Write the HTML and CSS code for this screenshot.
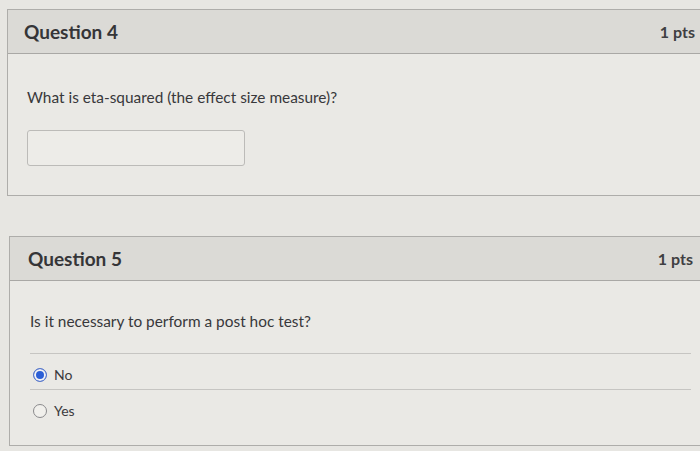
FILE: index.html
```html
<!DOCTYPE html>
<html>
<head>
<meta charset="utf-8">
<link rel="stylesheet" href="styles.css">
</head>
<body>
<div class="page">
  <section class="card q4">
    <header class="card-head">
      <h2 class="title">Question 4</h2>
      <span class="pts">1 pts</span>
    </header>
    <div class="card-body q4-body">
      <p class="prompt">What is eta-squared (the effect size measure)?</p>
      <div class="input"></div>
    </div>
  </section>

  <section class="card q5">
    <header class="card-head">
      <h2 class="title">Question 5</h2>
      <span class="pts">1 pts</span>
    </header>
    <div class="card-body q5-body">
      <p class="prompt">Is it necessary to perform a post hoc test?</p>
      <div class="answers">
        <label class="answer">
          <span class="radio checked"></span>
          <span class="answer-text">No</span>
        </label>
        <label class="answer">
          <span class="radio"></span>
          <span class="answer-text">Yes</span>
        </label>
      </div>
    </div>
  </section>
</div>
</body>
</html>
```
FILE: styles.css
```css
html, body {
  margin: 0;
  padding: 0;
}
body {
  background: #e7e6e2;
  font-family: Lato, "Noto Sans", sans-serif;
  color: #3a3a3d;
  width: 700px;
  height: 451px;
  overflow: hidden;
}
.page {
  padding-top: 9px;
  display: flex;
  flex-direction: column;
  gap: 40px;
}
.card {
  border: 1.5px solid #aeadaa;
  background: #eae9e5;
  margin-right: -6px;
}
.q4 {
  margin-left: 7px;
}
.q5 {
  margin-left: 9px;
}
.card-head {
  display: flex;
  justify-content: space-between;
  align-items: center;
  height: 43px;
  background: #dbdad6;
  border-bottom: 1.5px solid #a9a8a5;
  padding: 0 10px 0 16px;
}
.q5 .card-head {
  padding-left: 18px;
  padding-right: 12px;
}
.title {
  margin: 0;
  font-size: 19px;
  font-weight: 700;
  color: #353538;
}
.pts {
  font-size: 16px;
  font-weight: 700;
  color: #3f3f42;
}
.card-body {
  padding: 32px 16px 29px 19px;
}
.prompt {
  margin: 0;
  font-size: 15.4px;
  line-height: 22px;
  color: #38383b;
}
.input {
  margin-top: 22px;
  width: 216px;
  height: 34px;
  border: 1px solid #bcbbb8;
  border-radius: 3px;
  background: #edece8;
}
.q5-body {
  padding: 29px 14px 20px 20px;
}
.answers {
  margin-top: 21px;
  display: flex;
  flex-direction: column;
}
.answer {
  display: flex;
  align-items: center;
  gap: 7px;
  height: 36px;
  box-sizing: border-box;
  padding-top: 6px;
  border-top: 1px solid #c6c5c2;
  padding-left: 3px;
  font-size: 14px;
  color: #3a3a3d;
}
.radio {
  width: 12px;
  height: 12px;
  border-radius: 50%;
  border: 1px solid #8a8a8c;
  background: #f1f0ec;
  box-sizing: content-box;
}
.radio.checked {
  border: 1px solid #5a78c8;
  background: #2c5fd6;
  box-shadow: inset 0 0 0 2px #f3f3f5;
}
```
